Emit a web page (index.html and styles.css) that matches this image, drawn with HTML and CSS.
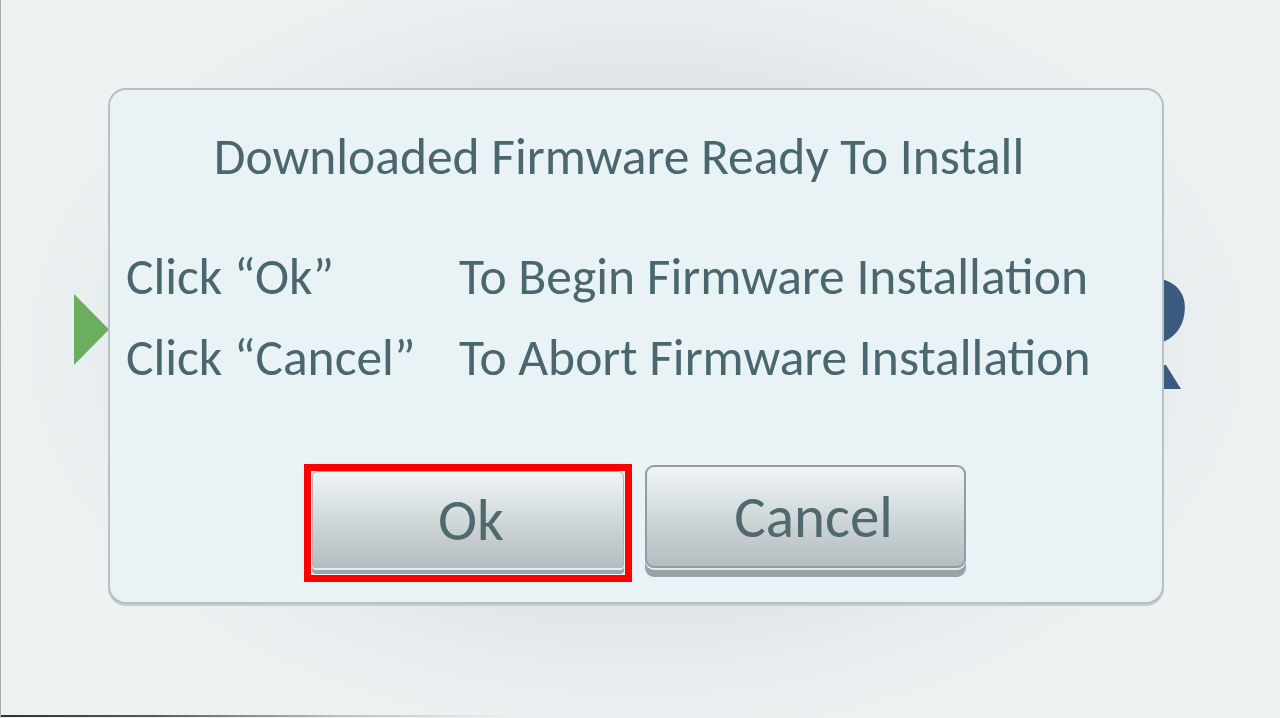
FILE: index.html
```html
<!DOCTYPE html>
<html lang="en">
<head>
<meta charset="utf-8">
<title>Firmware Install</title>
<link rel="stylesheet" href="styles.css">
</head>
<body>
<div class="screen">
  <svg class="play-mark" width="36" height="72" viewBox="0 0 36 72" aria-hidden="true">
    <polygon points="0,0 35,35.5 0,71" fill="#6aae60"/>
  </svg>
  <svg class="logo-mark" width="40" height="130" viewBox="0 0 40 130" aria-hidden="true">
    <path d="M0 8 C 24 8, 38 24, 33 46 C 30 62, 18 73, 0 75 Z" fill="#3b5a7e"/>
    <polygon points="0,95 15,95 30,119 0,119" fill="#3b5a7e"/>
  </svg>
  <section class="dialog">
    <h1 class="dialog-title">Downloaded Firmware Ready To Install</h1>
    <div class="instructions">
      <span class="key">Click “Ok”</span>
      <span class="action">To Begin Firmware Installation</span>
      <span class="key">Click “Cancel”</span>
      <span class="action">To Abort Firmware Installation</span>
    </div>
    <div class="actions">
      <div class="focus-ring">
        <button class="btn btn-ok" type="button">Ok</button>
      </div>
      <button class="btn btn-cancel" type="button">Cancel</button>
    </div>
  </section>
</div>
</body>
</html>
```
FILE: styles.css
```css
* { box-sizing: border-box; }

html, body {
  margin: 0;
  padding: 0;
  background: #edf2f3;
}

.screen {
  position: relative;
  width: 1280px;
  height: 718px;
  overflow: hidden;
  padding: 88px 0 0 107px;
  border-left: 1px solid #a7aeb1;
  font-family: "Carlito", "Lato", "Open Sans", sans-serif;
  color: #4a666f;
  background:
    linear-gradient(to right, #2f3233 0%, #555a5c 12%, #b9bec0 26%, rgba(237,242,243,0) 40%) 0 715px / 100% 2px no-repeat,
    radial-gradient(ellipse 640px 410px at 636px 345px, #d3d9dc 0%, #d8dee0 45%, #e5eaec 75%, #edf2f3 100%);
}

.play-mark {
  position: absolute;
  left: 73px;
  top: 294px;
}

.logo-mark {
  position: absolute;
  left: 1150px;
  top: 270px;
}

.dialog {
  position: relative;
  z-index: 1;
  width: 1056px;
  height: 516px;
  border: 2px solid #b8c0c3;
  border-radius: 18px;
  background: #e9f2f5;
  box-shadow: 0 2px 0 #c7ced1;
  padding: 35px 0 0 0;
}

.dialog-title {
  margin: 0;
  padding-right: 34px;
  text-align: center;
  font-size: 51.5px;
  font-weight: 400;
  line-height: normal;
  color: #4a666f;
}

.instructions {
  display: grid;
  grid-template-columns: 333px auto;
  margin-top: 48px;
  padding-left: 16px;
  font-size: 51.5px;
  line-height: 81px;
}

.actions {
  display: flex;
  align-items: flex-start;
  gap: 13px;
  margin-top: 66px;
  padding-left: 194px;
}

.focus-ring {
  width: 328px;
  height: 118px;
  border: 7px solid #ff0000;
  padding: 0 1px 0 1px;
}

.btn {
  display: flex;
  align-items: center;
  justify-content: center;
  margin: 0;
  font-family: inherit;
  font-size: 59px;
  color: #50696f;
  cursor: pointer;
  background: linear-gradient(to bottom, #eff4f5 0%, #dde4e6 30%, #c7cfd1 65%, #b4bdbf 100%);
}

.btn-ok {
  width: 100%;
  height: 97px;
  padding-left: 12px;
  border: 1px solid #a9b4b7;
  border-bottom: none;
  border-radius: 6px 6px 4px 4px;
  box-shadow: 0 2px 0 #e3ecef, 0 6px 0 #9aa5a9;
}

.btn-cancel {
  width: 321px;
  height: 103px;
  margin-top: 1px;
  padding-left: 22px;
  border: 2px solid #8e9ea3;
  border-radius: 9px;
  box-shadow: 0 2px 0 #dfe8eb, 0 9px 0 #97a3a7;
}
```
